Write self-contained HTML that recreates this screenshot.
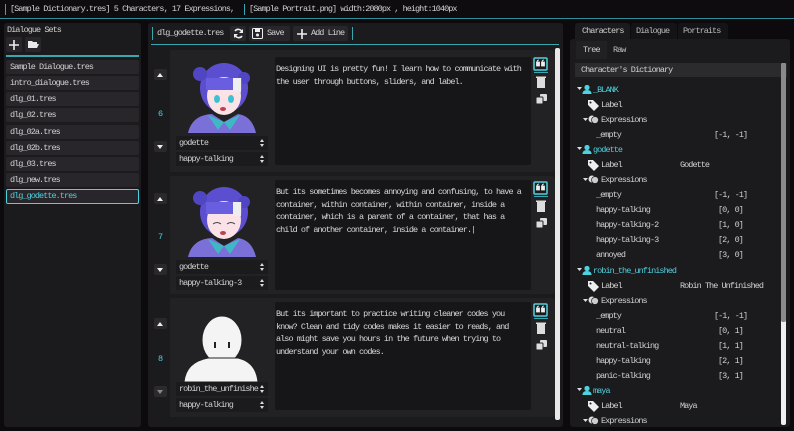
<!DOCTYPE html>
<html><head><meta charset="utf-8"><style>
*{box-sizing:border-box;margin:0;padding:0}
body{width:794px;height:431px;background:#0d0a0e;font-family:"Liberation Mono",monospace;font-size:8.5px;letter-spacing:-0.95px;color:#d2d2d2;position:relative;overflow:hidden}
.a{position:absolute;white-space:pre}
.panel{position:absolute;background:#1b1a1d;border-radius:3px}
.item{position:absolute;left:6px;width:133px;height:14px;background:#28262a;border-radius:2px;padding:2px 0 0 4px;line-height:10px}
.btn{position:absolute;background:#28262a;border-radius:2px}
.cyan{color:#4fd2e0}
.card{position:absolute;left:150px;width:405px;background:#222124;border-radius:3px}
.strip{position:absolute;left:0;top:0;width:20px;height:100%;background:#1b1a1d}
.arr{position:absolute;left:4px;width:13px;height:11px;background:#2a282c;border-radius:2px}
.tri{position:absolute;left:7px;width:0;height:0;border-left:3.5px solid transparent;border-right:3.5px solid transparent}
.up{border-bottom:4px solid #eee}
.dn{border-top:4px solid #eee}
.ta{position:absolute;left:125px;width:256px;background:#161518;border-radius:2px;padding:6px 0 0 1px;line-height:12.6px;color:#d8d8d8;white-space:pre}
.dd{position:absolute;left:26px;width:92px;height:14px;background:#1b1a1d;padding:2px 0 0 3px;line-height:10px}
.dd:before{content:"";position:absolute;right:4px;top:3px;border-left:2px solid transparent;border-right:2px solid transparent;border-bottom:3px solid #ddd}
.dd:after{content:"";position:absolute;right:4px;top:8px;border-left:2px solid transparent;border-right:2px solid transparent;border-top:3px solid #ddd}
.row{position:absolute;line-height:10px;white-space:pre}
</style></head><body>
<div class="a" style="left:0;top:0;width:794px;height:18px;background:#0f0c10"></div>
<div class="a" style="left:5px;top:4px;width:1px;height:11px;background:#3aa7b0"></div>
<div class="a" style="left:10px;top:4px">[Sample Dictionary.tres] 5 Characters, 17 Expressions,</div>
<div class="a" style="left:244px;top:4px;width:1px;height:11px;background:#3aa7b0"></div>
<div class="a" style="left:249px;top:4px">[Sample Portrait.png] width:2080px , height:1040px</div>
<div class="a" style="left:0;top:18px;width:794px;height:1px;background:#2f8f98"></div>

<div class="panel" style="left:4px;top:23px;width:137px;height:404px"></div>
<div class="a" style="left:7px;top:25px">Dialogue Sets</div>
<div class="btn" style="left:6px;top:37px;width:16px;height:15px"></div>
<svg class="a" style="left:9px;top:40px" width="10" height="10"><path d="M5 0v10M0 5h10" stroke="#eee" stroke-width="1.6"/></svg>
<div class="btn" style="left:25px;top:37px;width:16px;height:15px"></div>
<svg class="a" style="left:27px;top:40px" width="12" height="9"><path d="M1 1h4l1 1h4v2H3L1 8z M3 4h9l-2 4H1z" fill="#e8e8e8"/></svg>
<div class="a" style="left:6px;top:55px;width:133px;height:2px;background:#3aa7b0"></div>
<div class="item" style="top:60px">Sample Dialogue.tres</div>
<div class="item" style="top:76px">intro_dialogue.tres</div>
<div class="item" style="top:92px">dlg_01.tres</div>
<div class="item" style="top:108px">dlg_02.tres</div>
<div class="item" style="top:125px">dlg_02a.tres</div>
<div class="item" style="top:141px">dlg_02b.tres</div>
<div class="item" style="top:157px">dlg_03.tres</div>
<div class="item" style="top:173px">dlg_new.tres</div>
<div class="item cyan" style="top:189px;height:15px;border:1px solid #4fd2e0;padding:1px 0 0 3px">dlg_godette.tres</div>

<div class="panel" style="left:148px;top:23px;width:415px;height:404px"></div>
<div class="a" style="left:152px;top:27px;width:1px;height:13px;background:#3aa7b0"></div>
<div class="a" style="left:157px;top:28px">dlg_godette.tres</div>
<div class="btn" style="left:230px;top:26px;width:16px;height:15px"></div>
<svg class="a" style="left:233px;top:28px" width="11" height="11"><path d="M9 4A4 4 0 0 0 2 3M2 7a4 4 0 0 0 7 1" stroke="#eee" stroke-width="1.6" fill="none"/><path d="M10 1v4H6zM1 10V6h4z" fill="#eee"/></svg>
<div class="btn" style="left:249px;top:26px;width:41px;height:15px"></div>
<svg class="a" style="left:252px;top:28px" width="11" height="11"><rect x="0.5" y="0.5" width="10" height="10" rx="1" fill="none" stroke="#eee"/><rect x="3" y="1" width="5" height="3" fill="#eee"/><circle cx="5.5" cy="7" r="1.5" fill="#eee"/></svg>
<div class="a" style="left:267px;top:28px">Save</div>
<div class="btn" style="left:293px;top:26px;width:55px;height:15px"></div>
<svg class="a" style="left:297px;top:29px" width="10" height="10"><path d="M5 0v10M0 5h10" stroke="#eee" stroke-width="1.6"/></svg>
<div class="a" style="left:311px;top:28px">Add Line</div>
<div class="a" style="left:352px;top:27px;width:1px;height:13px;background:#3aa7b0"></div>
<div class="a" style="left:151px;top:44px;width:408px;height:1px;background:#3aa7b0"></div>
<div class="a" style="left:555px;top:48px;width:5px;height:372px;background:#e8e8e8;border-radius:2px"></div>

<div class="card" style="top:50px;height:122px">
 <div class="strip"></div>
 <div class="arr" style="top:19px"></div><div class="tri up" style="top:23px"></div>
 <div class="a cyan" style="left:8px;top:59px">6</div>
 <div class="arr" style="top:91px"></div><div class="tri dn" style="top:95px"></div>
 <svg class="a" style="left:28px;top:10px" width="92" height="73"><ellipse cx="46" cy="28" rx="24" ry="25" fill="#5b4fd0"/><circle cx="22" cy="14" r="7" fill="#5046c4"/><circle cx="66" cy="18" r="6" fill="#5046c4"/><ellipse cx="46" cy="36" rx="17" ry="19" fill="#fbe2e6"/><rect x="28" y="18" width="36" height="12" fill="#6a5ee0"/><rect x="55" y="18" width="8" height="14" fill="#eee"/><ellipse cx="39" cy="39" rx="3" ry="4" fill="#3fc0d0"/><ellipse cx="53" cy="39" rx="3" ry="4" fill="#3fc0d0"/><ellipse cx="45" cy="49" rx="3" ry="2" fill="#c04050"/><path d="M10 73 Q14 55 34 54 L46 62 L60 54 Q74 56 78 73Z" fill="#7b70d8"/><path d="M30 55 L46 62 L40 70 Z M62 55 L46 62 L52 70Z" fill="#3fb7c4"/></svg>
 <div class="dd" style="top:86px">godette</div>
 <div class="dd" style="top:102px">happy-talking</div>
 <div class="ta" style="top:7px;height:108px">Designing UI is pretty fun! I learn how to communicate with
the user through buttons, sliders, and label.</div>
</div>
<div class="card" style="top:176px;height:118px">
 <div class="strip"></div>
 <div class="arr" style="top:17px"></div><div class="tri up" style="top:21px"></div>
 <div class="a cyan" style="left:8px;top:56px">7</div>
 <div class="arr" style="top:88px"></div><div class="tri dn" style="top:92px"></div>
 <svg class="a" style="left:28px;top:8px" width="92" height="73"><ellipse cx="46" cy="28" rx="24" ry="25" fill="#5b4fd0"/><circle cx="22" cy="14" r="7" fill="#5046c4"/><circle cx="66" cy="18" r="6" fill="#5046c4"/><ellipse cx="46" cy="36" rx="17" ry="19" fill="#fbe2e6"/><rect x="28" y="18" width="36" height="12" fill="#6a5ee0"/><rect x="55" y="18" width="8" height="14" fill="#eee"/><path d="M35 40 q4 -3 8 0 M49 40 q4 -3 8 0" stroke="#444" fill="none"/><ellipse cx="45" cy="49" rx="3" ry="2" fill="#c04050"/><path d="M10 73 Q14 55 34 54 L46 62 L60 54 Q74 56 78 73Z" fill="#7b70d8"/><path d="M30 55 L46 62 L40 70 Z M62 55 L46 62 L52 70Z" fill="#3fb7c4"/></svg>
 <div class="dd" style="top:84px">godette</div>
 <div class="dd" style="top:100px">happy-talking-3</div>
 <div class="ta" style="top:4px;height:110px">But its sometimes becomes annoying and confusing, to have a
container, within container, within container, inside a
container, which is a parent of a container, that has a
child of another container, inside a container.|</div>
</div>
<div class="card" style="top:298px;height:119px">
 <div class="strip"></div>
 <div class="arr" style="top:20px"></div><div class="tri up" style="top:24px"></div>
 <div class="a cyan" style="left:8px;top:56px">8</div>
 <div class="arr" style="top:88px;background:#2c2a2e"></div><div class="tri dn" style="top:92px;border-top-color:#888"></div>
 <svg class="a" style="left:28px;top:14px" width="92" height="70"><ellipse cx="44" cy="28" rx="20" ry="24" fill="#f4f4f4" stroke="#222"/><path d="M6 70 Q8 50 30 46 L60 46 Q78 50 80 70Z" fill="#f4f4f4" stroke="#222"/><rect x="36" y="30" width="2" height="6" fill="#222"/><rect x="50" y="30" width="2" height="6" fill="#222"/></svg>
 <div class="dd" style="top:84px">robin_the_unfinishe</div>
 <div class="dd" style="top:100px">happy-talking</div>
 <div class="ta" style="top:4px;height:108px">But its important to practice writing cleaner codes you
know? Clean and tidy codes makes it easier to reads, and
also might save you hours in the future when trying to
understand your own codes.</div>
</div>
<svg width="0" height="0" style="position:absolute"><defs>
<g id="side"><rect x="1" y="1" width="13" height="12" rx="1" fill="#1b1a1d" stroke="#4fd2e0" stroke-width="1.5"/><path d="M3.5 5h3v4h-3zM8.5 5h3v4h-3zM4 5q0-2 2-2M9 5q0-2 2-2" fill="#eee" stroke="#eee" stroke-width="0.8"/><rect x="1" y="15" width="14" height="1" fill="#3aa7b0"/><rect x="4" y="21" width="8" height="10" fill="#ddd"/><rect x="3" y="19.5" width="10" height="1.5" fill="#ddd"/><rect x="7" y="37" width="7" height="7" rx="1" fill="#ddd"/><rect x="3" y="40" width="7" height="7" rx="1" fill="#ddd" stroke="#222124"/></g>
<g id="ch"><path d="M0 2l5 0l-2.5 3z" fill="#ddd"/><circle cx="10" cy="2.5" r="2.6" fill="#4fd2e0"/><path d="M5.5 9 q0-4 4.5-4 q4.5 0 4.5 4z" fill="#4fd2e0"/></g>
<g id="lb"><path d="M0 0h5l6 6-5 5-6-6z" fill="#eee"/><circle cx="2.5" cy="2.5" r="1" fill="#1b1a1d"/></g>
<g id="ex"><path d="M0 3l5 0l-2.5 3z" fill="#ddd"/><circle cx="9" cy="4" r="3.5" fill="#ddd"/><circle cx="12" cy="5" r="3.5" fill="#ccc" stroke="#1b1a1d" stroke-width="0.7"/></g>
</defs></svg>
<svg class="a" style="left:533px;top:57px" width="16" height="50"><use href="#side"/></svg>
<svg class="a" style="left:533px;top:181px" width="16" height="50"><use href="#side"/></svg>
<svg class="a" style="left:533px;top:303px" width="16" height="50"><use href="#side"/></svg>

<div class="a" style="left:575px;top:23px;width:55px;height:17px;background:#1b1a1d;border-radius:3px 3px 0 0"></div>
<div class="a" style="left:631px;top:23px;width:46px;height:16px;background:#141316;border-radius:3px 3px 0 0"></div>
<div class="a" style="left:678px;top:23px;width:50px;height:16px;background:#141316;border-radius:3px 3px 0 0"></div>
<div class="a" style="left:582px;top:26px">Characters</div>
<div class="a" style="left:636px;top:26px;color:#bbb">Dialogue</div>
<div class="a" style="left:683px;top:26px;color:#bbb">Portraits</div>
<div class="panel" style="left:570px;top:39px;width:220px;height:388px"></div>
<div class="a" style="left:576px;top:41px;width:31px;height:18px;background:#212023"></div>
<div class="a" style="left:583px;top:45px">Tree</div>
<div class="a" style="left:613px;top:45px;color:#bbb">Raw</div>
<div class="a" style="left:575px;top:63px;width:212px;height:14px;background:#2b2a2d"></div>
<div class="a" style="left:581px;top:65px">Character's Dictionary</div>
<div class="a" style="left:781px;top:63px;width:5px;height:362px;background:#f0f0f0;border-radius:2px"></div>
<div class="a" style="left:781px;top:63px;width:5px;height:259px;background:#8a898c;border-radius:2px"></div>

<svg class="a" style="left:577px;top:85px" width="20" height="10"><use href="#ch"/></svg><div class="row cyan" style="left:593px;top:85px">_BLANK</div>
<svg class="a" style="left:588px;top:100px" width="12" height="12"><use href="#lb"/></svg><div class="row" style="left:601px;top:100px">Label</div>
<svg class="a" style="left:583px;top:115px" width="16" height="10"><use href="#ex"/></svg><div class="row" style="left:601px;top:115px">Expressions</div>
<div class="row" style="left:596px;top:130px">_empty</div><div class="row" style="left:714px;top:130px">[-1, -1]</div>

<svg class="a" style="left:577px;top:145px" width="20" height="10"><use href="#ch"/></svg><div class="row cyan" style="left:593px;top:145px">godette</div>
<svg class="a" style="left:588px;top:160px" width="12" height="12"><use href="#lb"/></svg><div class="row" style="left:601px;top:160px">Label</div><div class="row" style="left:680px;top:160px">Godette</div>
<svg class="a" style="left:583px;top:175px" width="16" height="10"><use href="#ex"/></svg><div class="row" style="left:601px;top:175px">Expressions</div>
<div class="row" style="left:596px;top:190px">_empty</div><div class="row" style="left:714px;top:190px">[-1, -1]</div>
<div class="row" style="left:596px;top:205px">happy-talking</div><div class="row" style="left:718px;top:205px">[0, 0]</div>
<div class="row" style="left:596px;top:220px">happy-talking-2</div><div class="row" style="left:718px;top:220px">[1, 0]</div>
<div class="row" style="left:596px;top:235px">happy-talking-3</div><div class="row" style="left:718px;top:235px">[2, 0]</div>
<div class="row" style="left:596px;top:250px">annoyed</div><div class="row" style="left:718px;top:250px">[3, 0]</div>

<svg class="a" style="left:577px;top:266px" width="20" height="10"><use href="#ch"/></svg><div class="row cyan" style="left:593px;top:266px">robin_the_unfinished</div>
<svg class="a" style="left:588px;top:281px" width="12" height="12"><use href="#lb"/></svg><div class="row" style="left:601px;top:281px">Label</div><div class="row" style="left:680px;top:281px">Robin The Unfinished</div>
<svg class="a" style="left:583px;top:296px" width="16" height="10"><use href="#ex"/></svg><div class="row" style="left:601px;top:296px">Expressions</div>
<div class="row" style="left:596px;top:311px">_empty</div><div class="row" style="left:714px;top:311px">[-1, -1]</div>
<div class="row" style="left:596px;top:326px">neutral</div><div class="row" style="left:718px;top:326px">[0, 1]</div>
<div class="row" style="left:596px;top:341px">neutral-talking</div><div class="row" style="left:718px;top:341px">[1, 1]</div>
<div class="row" style="left:596px;top:356px">happy-talking</div><div class="row" style="left:718px;top:356px">[2, 1]</div>
<div class="row" style="left:596px;top:371px">panic-talking</div><div class="row" style="left:718px;top:371px">[3, 1]</div>

<svg class="a" style="left:577px;top:386px" width="20" height="10"><use href="#ch"/></svg><div class="row cyan" style="left:593px;top:386px">maya</div>
<svg class="a" style="left:588px;top:401px" width="12" height="12"><use href="#lb"/></svg><div class="row" style="left:601px;top:401px">Label</div><div class="row" style="left:680px;top:401px">Maya</div>
<svg class="a" style="left:583px;top:416px" width="16" height="10"><use href="#ex"/></svg><div class="row" style="left:601px;top:416px">Expressions</div>
</body></html>
